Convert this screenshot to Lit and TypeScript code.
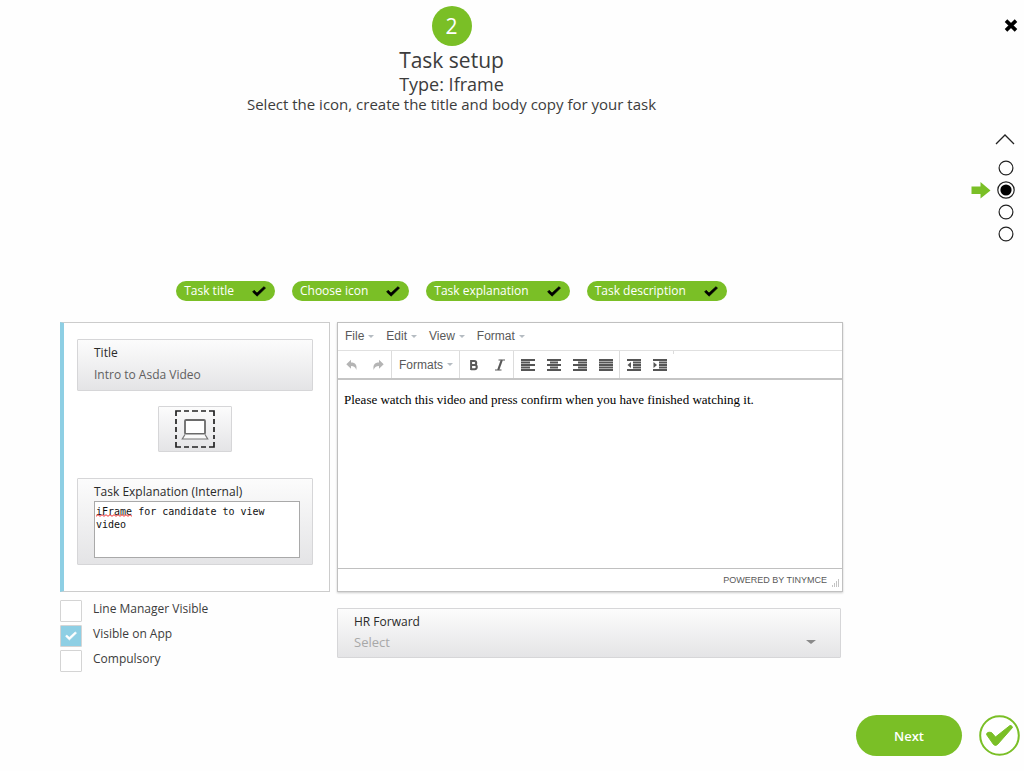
import { LitElement, html, css, svg } from "lit";
import { customElement, state } from "lit/decorators.js";

type Align = "left" | "center" | "right" | "full" | "outdent" | "indent";

const tick = (cls: string) => html`
  <svg class=${cls} viewBox="0 0 14 11" aria-hidden="true">
    <path d="M0.6 5.9 2.1 4.3 5 7 11.9 0.7 13.5 2.1 5.1 10.2Z" fill="currentColor" stroke="currentColor" stroke-width=".7" stroke-linejoin="round" />
  </svg>
`;

const lines: Record<Align, string> = {
  left: "M0 1h14M0 3.5h9M0 6h14M0 8.5h9M0 11h14",
  center: "M0 1h14M3 3.5h8M0 6h14M3 8.5h8M0 11h14",
  right: "M0 1h14M5 3.5h9M0 6h14M5 8.5h9M0 11h14",
  full: "M0 1h14M0 3.5h14M0 6h14M0 8.5h14M0 11h14",
  outdent: "M0 1h14M6 3.5h8M6 6h8M6 8.5h8M0 11h14",
  indent: "M0 1h14M6 3.5h8M6 6h8M6 8.5h8M0 11h14",
};

const alignIcon = (kind: Align) => html`
  <svg width="14" height="12" viewBox="0 0 14 12" aria-hidden="true">
    <path d=${lines[kind]} stroke="#555" stroke-width="1.9" fill="none" />
    ${kind === "outdent" ? svg`<path d="M4 3v6L0.5 6Z" fill="#555" />` : ""}
    ${kind === "indent" ? svg`<path d="M0.5 3v6L4 6Z" fill="#555" />` : ""}
  </svg>
`;

@customElement("task-editor")
export class TaskEditor extends LitElement {
  static styles = css`
    :host {
      display: flex;
      flex-direction: column;
      box-sizing: border-box;
      border: 1px solid #c0c0c0;
      box-shadow: 0 1px 2px rgba(0, 0, 0, 0.2);
      background: #fff;
      font-family: "Liberation Sans", Arial, sans-serif;
      font-size: 12px;
      color: #595959;
    }
    button {
      display: inline-flex;
      align-items: center;
      justify-content: center;
      border: 0;
      margin: 0;
      padding: 0;
      background: none;
      font: inherit;
      color: inherit;
    }
    .menu {
      display: flex;
      gap: 12px;
      height: 27px;
      padding: 0 7px;
      border-bottom: 1px solid #e0e0e0;
    }
    .menu .drop {
      height: 26px;
    }
    .drop {
      gap: 4px;
    }
    .caret {
      border: 3px solid transparent;
      border-top-color: #b5bcc2;
      border-bottom: 0;
    }
    .toolbar {
      display: flex;
      height: 27px;
      border-bottom: 2px solid #c5c5c5;
    }
    .group {
      display: flex;
      padding-left: 1px;
      border-right: 1px solid #dcdcdc;
    }
    .group:last-child {
      height: 3px;
      padding-left: 0;
    }
    .group.open {
      border-right: 0;
    }
    .tool {
      width: 26px;
    }
    .faded {
      color: #b4b4b4;
    }
    .formats {
      padding: 0 6px;
    }
    .body {
      flex: 1;
      display: block;
      box-sizing: border-box;
      width: 100%;
      min-height: 120px;
      border: 0;
      margin: 0;
      padding: 12px 6px;
      resize: none;
      outline: 0;
      background: none;
      font: 13px/16px "Liberation Serif", "Times New Roman", serif;
      color: #000;
    }
    .status {
      display: flex;
      align-items: center;
      justify-content: flex-end;
      gap: 4px;
      height: 22px;
      padding-right: 2px;
      border-top: 1px solid #c0c0c0;
      font-size: 9px;
    }
    .grip {
      align-self: flex-end;
      margin-bottom: 3px;
    }
  `;

  render() {
    return html`
      <div class="menu">
        ${["File", "Edit", "View", "Format"].map(
          (m) => html`<button class="drop">${m}<span class="caret"></span></button>`
        )}
      </div>
      <div class="toolbar">
        <div class="group">
          <button class="tool faded" aria-label="Undo">
            <svg width="12" height="12" viewBox="0 0 12 12"><path d="M5 0.8V3.4C9.5 3.4 11.3 6 10.3 11 9.6 8.2 8 7 5 7V9.7L0.3 5.2Z" fill="currentColor" /></svg>
          </button>
          <button class="tool faded" aria-label="Redo">
            <svg width="12" height="12" viewBox="0 0 12 12"><path d="M7 0.8V3.4C2.5 3.4 0.7 6 1.7 11 2.4 8.2 4 7 7 7V9.7L11.7 5.2Z" fill="currentColor" /></svg>
          </button>
        </div>
        <div class="group">
          <button class="drop formats">Formats<span class="caret"></span></button>
        </div>
        <div class="group">
          <button class="tool" aria-label="Bold">
            <svg width="10" height="12" viewBox="0 0 10 12"><path d="M1.9 1.9H5.2a2 2 0 0 1 0 4.1H2.2M1.9 6H5.7a2.1 2.1 0 0 1 0 4.2H1.9M2.1 1V11" fill="none" stroke="#595959" stroke-width="2" /></svg>
          </button>
          <button class="tool" aria-label="Italic">
            <svg width="12" height="12" viewBox="0 0 12 12"><path d="M4.5 1H11M1 11H7.5" stroke="#595959" stroke-width="1.2" /><path d="M7.8 1 4.2 11" stroke="#595959" stroke-width="2.2" /></svg>
          </button>
        </div>
        <div class="group">
          ${(["left", "center", "right", "full"] as Align[]).map(
            (a) => html`<button class="tool" aria-label="Align ${a}">${alignIcon(a)}</button>`
          )}
        </div>
        <div class="group open">
          ${(["outdent", "indent"] as Align[]).map(
            (a) => html`<button class="tool" aria-label=${a}>${alignIcon(a)}</button>`
          )}
        </div>
        <div class="group"></div>
      </div>
      <textarea class="body" aria-label="Task description" spellcheck="false" .value=${"Please watch this video and press confirm when you have finished watching it."}></textarea>
      <div class="status">
        <span>POWERED BY TINYMCE</span>
        <svg class="grip" width="9" height="9" viewBox="0 0 9 9" aria-hidden="true">
          <path d="M7 1h1M5 3h1M7 3h1M3 5h1M5 5h1M7 5h1M1 7h1M3 7h1M5 7h1M7 7h1" stroke="#8a8a8a" stroke-width="1.2" />
        </svg>
      </div>
    `;
  }
}

@customElement("app-root")
export class AppRoot extends LitElement {
  static styles = css`
    :host {
      display: block;
      background: #fefefe;
      font-family: "Open Sans", sans-serif;
      color: #3c3c3c;
    }
    .page {
      display: flex;
      flex-direction: column;
      box-sizing: border-box;
      min-height: 100vh;
    }
    .top {
      display: grid;
      grid-template-columns: minmax(0, 1fr) 121px;
    }
    .main {
      padding: 6px 60px 0;
    }
    button {
      border: 0;
      margin: 0;
      padding: 0;
      background: none;
      font: inherit;
      color: inherit;
    }
    .head {
      display: flex;
      flex-direction: column;
      align-items: center;
      text-align: center;
    }
    .step {
      width: 40px;
      height: 40px;
      border-radius: 50%;
      background: #7abf26;
      color: #fff;
      font-size: 21px;
      line-height: 40px;
    }
    h1, h2, p {
      margin: 0;
      font-weight: 400;
    }
    h1 {
      font-size: 21px;
      line-height: 28px;
    }
    h2 {
      font-size: 18px;
      line-height: 20px;
    }
    p {
      font-size: 15px;
      line-height: 20px;
    }
    .pills {
      display: flex;
      justify-content: center;
      gap: 17px;
      margin: 167px 0 21px;
    }
    .pill {
      display: flex;
      align-items: center;
      gap: 18px;
      height: 20px;
      padding: 0 9px 0 8px;
      border-radius: 10px;
      background: #7abf26;
      color: #fff;
      font-size: 12px;
      line-height: 18px;
      white-space: nowrap;
    }
    .pill-tick {
      width: 14px;
      height: 11px;
      color: #000;
    }
    .cols {
      display: grid;
      grid-template-columns: 270px minmax(0, 1fr);
      gap: 8px 7px;
    }
    .panel {
      display: flex;
      flex-direction: column;
      box-sizing: border-box;
      padding: 16px 16px 26px 13px;
      border: 1px solid #ccc;
      border-left: 4px solid #8ecfe4;
      background: #fff;
    }
    .box {
      display: flex;
      flex-direction: column;
      box-sizing: border-box;
      border: 1px solid #d6d6d8;
      border-radius: 1px;
      background: linear-gradient(#fcfcfc, #e4e4e6);
      font-size: 12px;
    }
    .field {
      padding: 4px 12px 6px 16px;
    }
    .field label,
    .forward label {
      line-height: 18px;
      color: #2a2a2a;
    }
    .text {
      width: 100%;
      height: 22px;
      box-sizing: border-box;
      border: 0;
      padding: 2px 0 0;
      background: none;
      font: 12px "Open Sans", sans-serif;
      color: #606060;
    }
    .picker {
      align-self: center;
      align-items: center;
      justify-content: center;
      width: 74px;
      height: 46px;
      margin: 15px 0 26px;
      border: 1px solid #d6d6d8;
    }
    .note {
      position: relative;
      display: flex;
    }
    .area {
      flex: 1;
      width: 100%;
      height: 57px;
      box-sizing: border-box;
      border: 1px solid #a9a9a9;
      margin: 0;
      padding: 3px 1px;
      resize: none;
      background: #fff;
      font: 10px/13px "DejaVu Sans Mono", monospace;
      color: #111;
    }
    .squiggle {
      position: absolute;
      left: 2px;
      top: 13px;
      pointer-events: none;
    }
    .checks {
      display: flex;
      flex-direction: column;
      gap: 3px;
    }
    .check {
      display: flex;
      gap: 11px;
      font-size: 12px;
      line-height: 17px;
    }
    .tickbox {
      display: grid;
      place-items: center;
      width: 22px;
      height: 22px;
      color: #fff;
    }
    .tickbox > * {
      grid-area: 1 / 1;
    }
    .tickbox input {
      appearance: none;
      width: 22px;
      height: 22px;
      box-sizing: border-box;
      margin: 0;
      border: 1px solid #d4d4d4;
      border-radius: 1px;
      background: #fff;
    }
    .tickbox input:checked {
      background: #8ecfe4;
    }
    .box-tick {
      width: 12px;
      height: 10px;
      pointer-events: none;
    }
    .forward {
      margin: 8px 2px 0 0;
      height: 50px;
      padding: 4px 24px 4px 16px;
      align-self: start;
    }
    .pick {
      display: grid;
      align-items: center;
    }
    .pick > * {
      grid-area: 1 / 1;
    }
    .pick select {
      appearance: none;
      width: 100%;
      height: 22px;
      border: 0;
      padding: 0;
      background: none;
      font: 13px "Open Sans", sans-serif;
      color: #a8a8a8;
    }
    .pick-caret {
      justify-self: end;
      border: 5px solid transparent;
      border-top: 4px solid #8a8a8a;
      border-bottom: 0;
      pointer-events: none;
    }
    .rail {
      display: flex;
      flex-direction: column;
      align-items: flex-end;
      padding: 19px 6px 0 0;
    }
    .close,
    .up {
      display: flex;
    }
    .up {
      margin: 100px 3px 13px 0;
    }
    .stops {
      display: flex;
      flex-direction: column;
      align-items: flex-end;
      gap: 2px;
      margin-right: 3px;
    }
    .stop {
      display: flex;
      align-items: center;
      gap: 6px;
      height: 20px;
    }
    .stop svg {
      display: block;
    }
    .foot {
      display: flex;
      align-items: center;
      justify-content: flex-end;
      gap: 17px;
      margin-top: auto;
      padding: 20px 4px 15px;
    }
    .next {
      height: 41px;
      padding: 0 38px;
      border-radius: 21px;
      background: #7abf26;
      color: #fff;
      font-size: 13px;
      font-weight: 600;
    }
    .done {
      display: flex;
    }
  `;

  @state() private stop = 1;

  private flags = [
    { id: "manager", text: "Line Manager Visible", on: false },
    { id: "app", text: "Visible on App", on: true },
    { id: "compulsory", text: "Compulsory", on: false },
  ];

  private renderStop(i: number) {
    const on = i === this.stop;
    return html`
      <button class="stop" aria-label="Step ${i + 1}" @click=${() => (this.stop = i)}>
        ${on
          ? html`<svg width="20" height="18" viewBox="0 0 20 18"><path d="M0.5 5.5H9.5V1L19.5 9.5 9.5 17.5V13H0.5Z" fill="#7abf26" /></svg>`
          : ""}
        <svg width="18" height="18" viewBox="0 0 18 18">
          <circle cx="9" cy="9" r=${on ? 8.2 : 6.9} fill="#fff" stroke="#222" stroke-width="1.2" />
          ${on ? svg`<circle cx="9" cy="9" r="5.6" fill="#000" />` : ""}
        </svg>
      </button>
    `;
  }

  render() {
    return html`
      <div class="page">
        <div class="top">
          <main class="main">
            <header class="head">
              <div class="step">2</div>
              <h1>Task setup</h1>
              <h2>Type: Iframe</h2>
              <p>Select the icon, create the title and body copy for your task</p>
            </header>
            <div class="pills">
              ${["Task title", "Choose icon", "Task explanation", "Task description"].map(
                (t) => html`<div class="pill"><span>${t}</span>${tick("pill-tick")}</div>`
              )}
            </div>
            <div class="cols">
              <section class="panel">
                <div class="box field">
                  <label for="title">Title</label>
                  <input class="text" id="title" .value=${"Intro to Asda Video"} />
                </div>
                <button class="box picker" aria-label="Choose icon">
                  <svg width="40" height="38" viewBox="0 0 40 38">
                    <path d="M1 6V1H6M34 1H39V6M39 32V37H34M6 37H1V32M9 1h5M17 1h6M26 1h5M9 37h5M17 37h6M26 37h5M1 9v5M1 17v5M1 25v4M39 9v5M39 17v5M39 25v4" fill="none" stroke="#222" stroke-width="1.7" />
                    <rect x="10" y="10" width="20" height="14" rx="1" fill="#fff" stroke="#6a6a6a" stroke-width="1.8" />
                    <path d="M10 24.5 7.3 29H32.7L30 24.5" fill="#fafafa" stroke="#777" stroke-width="1.2" />
                  </svg>
                </button>
                <div class="box field">
                  <label for="note">Task Explanation (Internal)</label>
                  <div class="note">
                    <textarea class="area" id="note" spellcheck="false" .value=${"iFrame for candidate to view video"}></textarea>
                    <svg class="squiggle" width="36" height="3" viewBox="0 0 36 3" aria-hidden="true">
                      <path d="M0 2.3 2 .7 4 2.3 6 .7 8 2.3 10 .7 12 2.3 14 .7 16 2.3 18 .7 20 2.3 22 .7 24 2.3 26 .7 28 2.3 30 .7 32 2.3 34 .7 36 2.3" fill="none" stroke="#f03030" />
                    </svg>
                  </div>
                </div>
              </section>
              <task-editor></task-editor>
              <div class="checks">
                ${this.flags.map(
                  (f) => html`
                    <label class="check" for=${f.id}>
                      <span class="tickbox"><input type="checkbox" id=${f.id} ?checked=${f.on} />${f.on ? tick("box-tick") : ""}</span>
                      ${f.text}
                    </label>
                  `
                )}
              </div>
              <div class="box forward">
                <label for="forward">HR Forward</label>
                <div class="pick">
                  <select id="forward"><option>Select</option></select>
                  <span class="pick-caret"></span>
                </div>
              </div>
            </div>
          </main>
          <nav class="rail" aria-label="Steps">
            <button class="close" aria-label="Close">
              <svg width="14" height="13" viewBox="0 0 14 13"><path d="M2 1.600 12 11.400M12 1.600 2 11.400" stroke="#000" stroke-width="3.600" /></svg>
            </button>
            <button class="up" aria-label="Previous step">
              <svg width="20" height="13" viewBox="0 0 20 13"><path d="M1 12 10 3 19 12" fill="none" stroke="#222" stroke-width="1.3" /></svg>
            </button>
            <div class="stops">${[0, 1, 2, 3].map((i) => this.renderStop(i))}</div>
          </nav>
        </div>
        <footer class="foot">
          <button class="next">Next</button>
          <button class="done" aria-label="Finish">
            <svg width="41" height="41" viewBox="0 0 41 41">
              <circle cx="20.500" cy="20.500" r="19.300" fill="#fff" stroke="#7abf26" stroke-width="2" />
              <path d="M7.500 19.500Q7.500 17.500 10 17.200L12.500 17.500 16.500 22 31 10.500Q33 10.200 33.500 12.500L18.500 29.500Q16.500 31.500 14.500 29.500Z" fill="#7abf26" stroke="#7abf26" stroke-linejoin="round" />
            </svg>
          </button>
        </footer>
      </div>
    `;
  }
}
